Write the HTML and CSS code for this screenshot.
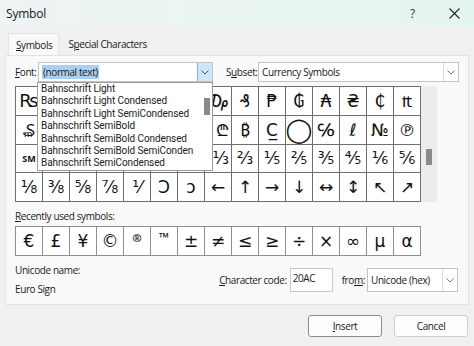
FILE: index.html
```html
<!DOCTYPE html>
<html>
<head>
<meta charset="utf-8">
<link rel="stylesheet" href="styles.css">
</head>
<body>
<div class="dialog">
  <div class="titlebar">
    <span class="title">Symbol</span>
    <span class="help">?</span>
    <span class="close"><svg width="11" height="11" viewBox="0 0 11 11"><path d="M0.5 0.5 L10.5 10.5 M10.5 0.5 L0.5 10.5" stroke="#222" stroke-width="1.1" fill="none"/></svg></span>
  </div>
  <div class="tabs">
    <div class="tab active"><u>S</u>ymbols</div>
    <div class="tab">S<u>p</u>ecial Characters</div>
  </div>
  <div class="panel">
    <div class="row-font">
      <span class="lbl lbl-font"><u>F</u>ont:</span>
      <div class="combo font-combo">
        <span class="combo-text"><span class="sel">(normal text)</span></span>
        <span class="arrow arrow-active"><svg width="8" height="5" viewBox="0 0 8 5"><path d="M0.5 0.5 L4 4 L7.5 0.5" stroke="#555" fill="none"/></svg></span>
        <div class="dropdown">
          <ul class="dd-list">
            <li>Bahnschrift Light</li>
            <li>Bahnschrift Light Condensed</li>
            <li>Bahnschrift Light SemiCondensed</li>
            <li>Bahnschrift SemiBold</li>
            <li>Bahnschrift SemiBold Condensed</li>
            <li>Bahnschrift SemiBold SemiConden</li>
            <li>Bahnschrift SemiCondensed</li>
          </ul>
          <div class="dd-scroll"><div class="dd-thumb"></div></div>
        </div>
      </div>
      <span class="lbl lbl-subset">S<u>u</u>bset:</span>
      <div class="combo subset-combo">
        <span class="combo-text">Currency Symbols</span>
        <span class="arrow arrow-sep"><svg width="8" height="5" viewBox="0 0 8 5"><path d="M0.5 0.5 L4 4 L7.5 0.5" stroke="#777" fill="none"/></svg></span>
      </div>
    </div>
    <div class="grid-wrap">
      <div class="grid">
        <div class="cell rs">₨</div><div class="cell"></div><div class="cell"></div><div class="cell"></div><div class="cell"></div><div class="cell"></div><div class="cell"></div><div class="cell part">₯</div><div class="cell">₰</div><div class="cell">₱</div><div class="cell">₲</div><div class="cell">₳</div><div class="cell">₴</div><div class="cell">₵</div><div class="cell">₶</div>
        <div class="cell">₷</div><div class="cell"></div><div class="cell"></div><div class="cell"></div><div class="cell"></div><div class="cell"></div><div class="cell"></div><div class="cell part">₾</div><div class="cell">₿</div><div class="cell">C̲</div><div class="cell circ">◯</div><div class="cell">℅</div><div class="cell">ℓ</div><div class="cell">№</div><div class="cell">℗</div>
        <div class="cell sm">SM</div><div class="cell"></div><div class="cell"></div><div class="cell"></div><div class="cell"></div><div class="cell"></div><div class="cell"></div><div class="cell part">⅓</div><div class="cell">⅔</div><div class="cell">⅕</div><div class="cell">⅖</div><div class="cell">⅗</div><div class="cell">⅘</div><div class="cell">⅙</div><div class="cell">⅚</div>
        <div class="cell">⅛</div><div class="cell">⅜</div><div class="cell">⅝</div><div class="cell">⅞</div><div class="cell">⅟</div><div class="cell">Ↄ</div><div class="cell">ↄ</div><div class="cell">←</div><div class="cell">↑</div><div class="cell">→</div><div class="cell">↓</div><div class="cell">↔</div><div class="cell">↕</div><div class="cell">↖</div><div class="cell">↗</div>
      </div>
      <div class="vscroll"><div class="vthumb"></div></div>
    </div>
    <div class="recent-label"><u>R</u>ecently used symbols:</div>
    <div class="recent">
      <div class="rcell">€</div><div class="rcell">£</div><div class="rcell">¥</div><div class="rcell">©</div><div class="rcell small">®</div><div class="rcell small tm">™</div><div class="rcell">±</div><div class="rcell">≠</div><div class="rcell">≤</div><div class="rcell">≥</div><div class="rcell">÷</div><div class="rcell">×</div><div class="rcell">∞</div><div class="rcell">µ</div><div class="rcell">α</div>
    </div>
    <div class="info">
      <div class="names">
        <div class="uname">Unicode name:</div>
        <div class="ename">Euro Sign</div>
      </div>
      <div class="code">
        <span class="lbl"><u>C</u>haracter code:</span>
        <div class="input">20AC</div>
        <span class="lbl lbl-from">fro<u>m</u>:</span>
        <div class="combo from-combo">
          <span class="combo-text">Unicode (hex)</span>
          <span class="arrow arrow-sep"><svg width="8" height="5" viewBox="0 0 8 5"><path d="M0.5 0.5 L4 4 L7.5 0.5" stroke="#777" fill="none"/></svg></span>
        </div>
      </div>
    </div>
  </div>
  <div class="footer">
    <div class="btn btn-default"><u>I</u>nsert</div>
    <div class="btn">Cancel</div>
  </div>
</div>
</body>
</html>
```
FILE: styles.css
```css
html, body {
  margin: 0;
  padding: 0;
}
body {
  width: 474px;
  height: 346px;
  overflow: hidden;
  background: #f0f0f0;
  font-family: "Open Sans", "Noto Sans", sans-serif;
  font-size: 10px;
  letter-spacing: -0.4px;
  color: #1a1a1a;
}
u { text-decoration: underline; text-underline-offset: 1px; }
.dialog {
  width: 474px;
  height: 346px;
  display: flex;
  flex-direction: column;
}
.titlebar {
  height: 27px;
  flex: none;
  display: flex;
  align-items: center;
  padding-left: 6px;
  background: linear-gradient(90deg, #eef3f3 0%, #eaf5f1 45%, #e4f4ee 100%);
  font-size: 12px;
  letter-spacing: -0.2px;
}
.title { flex: 1; }
.help {
  width: 12px;
  margin-right: 27px;
  font-size: 12px;
  color: #333;
}
.close {
  width: 11px;
  height: 11px;
  margin-right: 14px;
  display: flex;
}
.tabs {
  flex: none;
  display: flex;
  margin-top: 6px;
  padding-left: 8px;
  height: 22px;
}
.tab {
  display: flex;
  align-items: center;
  padding: 0 6px 0 7px;
  font-size: 10px;
  color: #1a1a1a;
  background: #f0f0f0;
}
.tab.active {
  background: #f9f9f9;
  border: 1px solid #e3e3e3;
  border-bottom: none;
  margin-right: 2px;
}
.panel {
  flex: none;
  height: 250px;
  box-sizing: border-box;
  margin: 0 5px;
  background: #f9f9f9;
  border: 1px solid #e3e3e3;
  padding: 6px 9px 0 9px;
}
.row-font {
  display: flex;
  align-items: center;
  height: 20px;
}
.lbl { white-space: nowrap; }
.lbl-font { width: 23px; }
.combo {
  position: relative;
  box-sizing: border-box;
  height: 20px;
  background: #fff;
  border: 1px solid #c4c4c4;
  display: flex;
  align-items: center;
}
.combo-text {
  flex: 1;
  padding-left: 3px;
  white-space: nowrap;
  overflow: hidden;
}
.font-combo { width: 175px; }
.sel {
  background: #a9d0f3;
  padding: 1px 1px;
}
.arrow {
  width: 15px;
  height: 100%;
  display: flex;
  align-items: center;
  justify-content: center;
  box-sizing: border-box;
}
.arrow-active {
  background: #cfe5f8;
  border-left: 1px solid #7eb4ea;
}
.arrow-sep {
  border-left: 1px solid #dcdcdc;
}
.lbl-subset { margin-left: 13px; width: 32px; }
.subset-combo { width: 201px; }
.dropdown {
  position: absolute;
  left: -2px;
  top: 19px;
  width: 176px;
  height: 89px;
  box-sizing: border-box;
  background: #fff;
  border: 1px solid #9a9a9a;
  display: flex;
  z-index: 5;
}
.dd-list {
  list-style: none;
  margin: 0;
  padding: 0 0 0 3px;
  flex: 1;
  font-family: Roboto, "Open Sans", sans-serif;
  letter-spacing: -0.1px;
  line-height: 12.4px;
  font-size: 10px;
  color: #222;
  white-space: nowrap;
  overflow: hidden;
}
.dd-scroll {
  width: 11px;
  flex: none;
  background: #fff;
  padding-top: 15px;
  display: flex;
  justify-content: center;
}
.dd-thumb {
  width: 6px;
  height: 17px;
  background: #8a8a8a;
}
.grid-wrap {
  margin-top: 4px;
  display: flex;
  align-items: stretch;
}
.grid {
  display: grid;
  grid-template-columns: repeat(15, 27px);
  grid-auto-rows: 28.75px;
  border-top: 1px solid #6f6f6f;
  border-left: 1px solid #6f6f6f;
  background: #fff;
}
.cell, .rcell {
  box-sizing: border-box;
  border-right: 1px solid #6f6f6f;
  border-bottom: 1px solid #6f6f6f;
  display: flex;
  align-items: center;
  justify-content: center;
  font-family: "DejaVu Sans", "Noto Sans", sans-serif;
  font-size: 17px;
  letter-spacing: 0;
  color: #111;
  overflow: hidden;
}
.cell.part { justify-content: flex-end; padding-right: 2px; }
.cell.rs { font-size: 18px; }
.cell.sm { font-size: 9px; font-weight: bold; font-family: "Open Sans", sans-serif; }
.cell.circ { font-size: 24px; }
.vscroll {
  width: 16px;
  background: #ececec;
  position: relative;
  display: flex;
  justify-content: center;
  padding-top: 63px;
  box-sizing: border-box;
}
.vthumb {
  width: 6px;
  height: 16px;
  background: #8a8a8a;
}
.recent-label {
  margin-top: 7px;
  height: 14px;
  line-height: 14px;
}
.recent {
  margin-top: 3px;
  display: grid;
  grid-template-columns: repeat(15, 27px);
  grid-auto-rows: 29px;
  border-top: 1px solid #8f8f8f;
  border-left: 1px solid #8f8f8f;
  background: #fff;
  width: max-content;
}
.rcell {
  border-color: #8f8f8f;
  font-size: 17px;
}
.rcell.small {
  font-size: 11px;
  font-weight: bold;
  font-family: "Open Sans", sans-serif;
  align-items: flex-start;
  padding-top: 3px;
}
.rcell.tm { font-size: 13px; padding-top: 1px; }
.info {
  display: flex;
  justify-content: space-between;
  margin-top: 7px;
}
.names { line-height: 14px; }
.ename { margin-top: 5px; }
.code {
  display: flex;
  align-items: center;
  margin-top: 5px;
  margin-right: 1px;
  height: 24px;
}
.input {
  box-sizing: border-box;
  width: 43px;
  height: 24px;
  margin-left: 3px;
  background: #fff;
  border: 1px solid #c9c9c9;
  padding: 2px 0 0 2px;
  line-height: 14px;
  align-self: flex-start;
}
.lbl-from { margin-left: 9px; }
.from-combo {
  margin-left: 2px;
  width: 91px;
  height: 24px;
}
.footer {
  flex: 1;
  display: flex;
  justify-content: flex-end;
  align-items: flex-start;
  padding-top: 10px;
  padding-right: 6px;
  gap: 12px;
}
.btn {
  box-sizing: border-box;
  width: 74px;
  height: 22px;
  background: #fdfdfd;
  border: 1px solid #d0d0d0;
  border-radius: 3px;
  display: flex;
  align-items: center;
  justify-content: center;
}
.btn-default {
  border: 1px solid #8c8c8c;
}
```
